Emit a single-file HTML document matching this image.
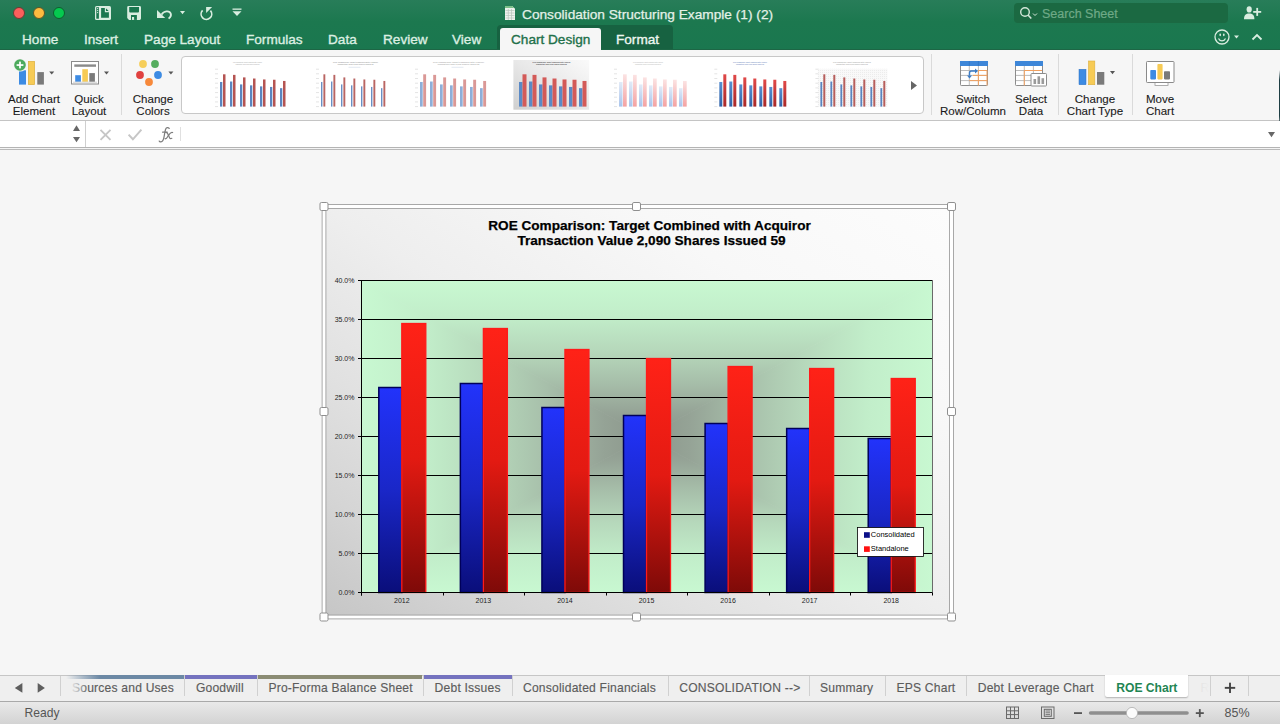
<!DOCTYPE html><html><head><meta charset="utf-8"><style>
*{margin:0;padding:0;box-sizing:border-box}
html,body{width:1280px;height:724px;overflow:hidden;background:#f6f6f6;font-family:"Liberation Sans",sans-serif}
.a{position:absolute}
.t{position:absolute;white-space:nowrap}
</style></head><body>

<div class="a" style="left:0;top:0;width:1280px;height:50px;background:linear-gradient(#287d59 0,#1c784f 22px,#1a774f 100%)"></div><div class="a" style="left:0;top:49px;width:1280px;height:1px;background:#1d6645"></div>
<div class="a" style="left:12.5px;top:6.7px;width:12.6px;height:12.6px;border-radius:50%;background:#fb5f5c;border:1px solid #6b3a33"></div>
<div class="a" style="left:32.7px;top:6.7px;width:12.6px;height:12.6px;border-radius:50%;background:#fdbb40;border:1px solid #5e5526"></div>
<div class="a" style="left:52.5px;top:6.7px;width:12.6px;height:12.6px;border-radius:50%;background:#05c94f;border:1px solid #0d5e2e"></div>
<svg class="a" style="left:0;top:0" width="260" height="28" viewBox="0 0 260 28">
<rect x="95" y="6" width="16" height="14" rx="1.6" fill="#d9ede0"/>
<rect x="96.3" y="7.2" width="2.6" height="11.5" fill="#1a774f"/>
<circle cx="97.6" cy="8.6" r="0.65" fill="#d9ede0"/><circle cx="97.6" cy="10.6" r="0.65" fill="#d9ede0"/><circle cx="97.6" cy="12.6" r="0.65" fill="#d9ede0"/>
<path d="M101.1 8.1H105.3L108.9 11.7V17.8H101.1Z" fill="#1a774f"/>
<path d="M105.4 8.1V11.6H108.9" fill="none" stroke="#d9ede0" stroke-width="1.1"/>
<path d="M106.1 8.4L108.6 10.9H106.1Z" fill="#1a774f"/>
<path d="M128.5 6H139.6A1.4 1.4 0 0 1 141 7.4V18.5A1.4 1.4 0 0 1 139.6 19.9H129L127.2 18.1V7.3A1.3 1.3 0 0 1 128.5 6Z" fill="#d9ede0"/>
<path d="M129.2 7.1H139V11.5A1 1 0 0 1 138 12.5H130.2A1 1 0 0 1 129.2 11.5Z" fill="#1a774f"/>
<rect x="131" y="15" width="5.9" height="4.9" fill="#1a774f"/>
<rect x="132" y="17" width="2.1" height="2.9" fill="#d9ede0"/>
<path d="M161.6 14.6C163.5 10.8 169.6 10 170.8 13.8C171.4 15.6 170.5 17.2 168.6 18.6" fill="none" stroke="#d9ede0" stroke-width="1.8"/>
<path d="M157 10V18.1H165.2Z" fill="#d9ede0"/>
<path d="M180 11h5l-2.5 3.2z" fill="#d9ede0"/>
<path d="M202.6 10.4A5.3 5.3 0 1 0 210.4 10.6" fill="none" stroke="#d9ede0" stroke-width="1.7"/>
<path d="M206.1 7.1H212.1L206.1 13.1Z" fill="#d9ede0"/>
<rect x="232.5" y="8.5" width="9" height="1.3" fill="#d9ede0"/>
<path d="M232.5 11.3h9l-4.5 4.8z" fill="#d9ede0"/>
</svg>
<svg class="a" style="left:504px;top:5px" width="12" height="16" viewBox="0 0 12 16"><path d="M1 1h7.2l2.8 2.8v11.2h-10z" fill="#eef3ee"/><path d="M1 1h7.2l2 2h-9.2z" fill="#7dc08a"/><g stroke="#b8c4bb" stroke-width="0.7"><line x1="1.5" y1="5.5" x2="10.5" y2="5.5"/><line x1="1.5" y1="8" x2="10.5" y2="8"/><line x1="1.5" y1="10.5" x2="10.5" y2="10.5"/><line x1="1.5" y1="13" x2="10.5" y2="13"/><line x1="4.3" y1="4" x2="4.3" y2="15"/><line x1="7.5" y1="4" x2="7.5" y2="15"/></g></svg>
<div class="t" style="left:522px;top:6.6px;font-size:13.7px;color:#e4f1e8;line-height:16px;-webkit-text-stroke:0.25px #e4f1e8">Consolidation Structuring Example (1) (2)</div>
<div class="a" style="left:1014px;top:3px;width:214px;height:20px;border-radius:4px;background:#1b6942"></div>
<svg class="a" style="left:1016px;top:4px" width="24" height="18" viewBox="0 0 24 18"><circle cx="9" cy="8" r="4.3" fill="none" stroke="#d2e6d8" stroke-width="1.4"/><line x1="12" y1="11" x2="15.3" y2="14.5" stroke="#d2e6d8" stroke-width="1.6"/><path d="M17 9.5l2 2l2-2" fill="none" stroke="#d2e6d8" stroke-width="1"/></svg>
<div class="t" style="left:1042px;top:6px;font-size:12.5px;color:#6fa987;line-height:16px;-webkit-text-stroke:0.2px #6fa987">Search Sheet</div>
<svg class="a" style="left:1240px;top:0px" width="30" height="24" viewBox="1240 0 30 24"><ellipse cx="1249.2" cy="9.4" rx="2.6" ry="3.1" fill="#d9ede0"/><path d="M1244 19.2C1244 14.8 1246 13.4 1249.2 13.4S1254.4 14.8 1254.4 19.2Z" fill="#d9ede0"/><rect x="1253.2" y="11" width="8" height="1.8" fill="#d9ede0"/><rect x="1256.3" y="7.9" width="1.8" height="8" fill="#d9ede0"/></svg>
<div class="t" style="left:22px;top:31.6px;font-size:13.6px;color:#dcefe2;line-height:16px;-webkit-text-stroke:0.35px #dcefe2">Home</div>
<div class="t" style="left:84px;top:31.6px;font-size:13.6px;color:#dcefe2;line-height:16px;-webkit-text-stroke:0.35px #dcefe2">Insert</div>
<div class="t" style="left:144px;top:31.6px;font-size:13.6px;color:#dcefe2;line-height:16px;-webkit-text-stroke:0.35px #dcefe2">Page Layout</div>
<div class="t" style="left:246px;top:31.6px;font-size:13.6px;color:#dcefe2;line-height:16px;-webkit-text-stroke:0.35px #dcefe2">Formulas</div>
<div class="t" style="left:328px;top:31.6px;font-size:13.6px;color:#dcefe2;line-height:16px;-webkit-text-stroke:0.35px #dcefe2">Data</div>
<div class="t" style="left:383px;top:31.6px;font-size:13.6px;color:#dcefe2;line-height:16px;-webkit-text-stroke:0.35px #dcefe2">Review</div>
<div class="t" style="left:452px;top:31.6px;font-size:13.6px;color:#dcefe2;line-height:16px;-webkit-text-stroke:0.35px #dcefe2">View</div>
<div class="a" style="left:497px;top:25px;width:176px;height:24px;background:#176241;border-radius:4px 4px 0 0"></div>
<div class="a" style="left:500px;top:28px;width:101px;height:22px;background:#f6f6f6;border-radius:3px 3px 0 0"></div>
<div class="t" style="left:511px;top:31.6px;font-size:13.6px;color:#22704a;line-height:16px;-webkit-text-stroke:0.35px #22704a">Chart Design</div>
<div class="t" style="left:616px;top:31.6px;font-size:13.6px;color:#eef7f1;line-height:16px;-webkit-text-stroke:0.35px #eef7f1">Format</div>
<svg class="a" style="left:1210px;top:27px" width="60" height="20" viewBox="0 0 60 20"><circle cx="12" cy="10" r="7" fill="none" stroke="#d9ede0" stroke-width="1.3"/><ellipse cx="10.2" cy="7.8" rx="0.85" ry="1.35" fill="#d9ede0"/><ellipse cx="13.8" cy="7.8" rx="0.85" ry="1.35" fill="#d9ede0"/><path d="M8.5 11.5a3.8 3.8 0 0 0 7 0" fill="none" stroke="#d9ede0" stroke-width="1.2"/><path d="M24 8.5h5l-2.5 3z" fill="#d9ede0"/><path d="M42.5 12.5l4.5-4.5l4.5 4.5" fill="none" stroke="#d9ede0" stroke-width="1.8"/></svg>
<div class="a" style="left:0;top:50px;width:1280px;height:71px;background:#f6f6f6;border-bottom:1px solid #c4c4c4"></div>
<svg class="a" style="left:0;top:50px" width="1280" height="70" viewBox="0 50 1280 70">
<!-- Add chart element -->
<rect x="19" y="70.3" width="7" height="14.3" fill="#3d8be3"/>
<rect x="28.4" y="61.4" width="6.2" height="23.2" fill="#f7cb55" stroke="#dcae3b" stroke-width="0.7"/>
<rect x="37.3" y="72.1" width="6.6" height="12.5" fill="#7a7a7a"/>
<circle cx="20" cy="65" r="6.6" fill="#f4f4f4"/>
<circle cx="20" cy="65" r="5.8" fill="#4caa5c"/>
<rect x="16.6" y="64.2" width="6.8" height="1.7" fill="#fff"/><rect x="19.15" y="61.6" width="1.7" height="6.8" fill="#fff"/>
<path d="M49.2 71.4h5l-2.5 3.2z" fill="#555"/>
<!-- quick layout -->
<rect x="71.5" y="61.5" width="27" height="22.5" fill="#fff" stroke="#8a8a8a" stroke-width="1"/>
<rect x="74.3" y="64.4" width="21.7" height="2.4" fill="#8a8a8a"/>
<rect x="75.2" y="75.2" width="5.7" height="6.6" fill="#3d8be3"/>
<rect x="82.3" y="69.2" width="5.6" height="12.6" fill="#f7cb55"/>
<rect x="89.3" y="73.1" width="5.6" height="8.7" fill="#7a7a7a"/>
<line x1="73" y1="82.2" x2="97" y2="82.2" stroke="#c8c8c8" stroke-width="0.8"/>
<path d="M104 71.4h5l-2.5 3.2z" fill="#555"/>
<line x1="121.5" y1="54" x2="121.5" y2="115" stroke="#dadada" stroke-width="1"/>
<!-- change colors -->
<circle cx="143" cy="64" r="3.9" fill="#f6ce5a"/>
<circle cx="155" cy="64" r="3.9" fill="#55ad5f"/>
<circle cx="140" cy="75" r="3.9" fill="#e0413f"/>
<circle cx="158" cy="75" r="3.9" fill="#3d8be3"/>
<circle cx="149" cy="82" r="3.9" fill="#f7893a"/>
<path d="M168.4 71.4h5l-2.5 3.2z" fill="#555"/>
<line x1="931.5" y1="54" x2="931.5" y2="115" stroke="#dadada" stroke-width="1"/>
<line x1="1058.5" y1="54" x2="1058.5" y2="115" stroke="#dadada" stroke-width="1"/>
<line x1="1132.5" y1="54" x2="1132.5" y2="115" stroke="#dadada" stroke-width="1"/>
<!-- switch row/column -->
<rect x="960.5" y="61.5" width="27" height="24" fill="#fff" stroke="#8c8c8c" stroke-width="1" rx="0.8"/>
<rect x="960" y="61" width="28" height="5" fill="#3d86d8"/>
<g stroke="#a9a9a9" stroke-width="0.8">
<line x1="969.3" y1="66" x2="969.3" y2="85.5"/><line x1="978.4" y1="66" x2="978.4" y2="85.5"/>
<line x1="961" y1="70.5" x2="987" y2="70.5"/><line x1="961" y1="75.4" x2="987" y2="75.4"/><line x1="961" y1="80.6" x2="987" y2="80.6"/>
</g>
<line x1="969.3" y1="61" x2="969.3" y2="66" stroke="#2a6fbf" stroke-width="0.6"/><line x1="978.4" y1="61" x2="978.4" y2="66" stroke="#2a6fbf" stroke-width="0.6"/>
<g stroke="#f0a060" stroke-width="1">
<line x1="978.4" y1="70.5" x2="978.4" y2="85.5"/><line x1="978.4" y1="70.5" x2="987" y2="70.5"/><line x1="973" y1="75.4" x2="987" y2="75.4"/><line x1="969.3" y1="80.6" x2="987" y2="80.6"/><line x1="987" y1="70.5" x2="987" y2="85.5"/>
</g>
<path d="M969.5 75.5v-2.5a2 2 0 0 1 2-2h4" fill="none" stroke="#3b7cc7" stroke-width="1.4"/>
<path d="M975 68.5l3 2.5l-3 2.5z" fill="#3b7cc7"/>
<path d="M967 75.5h5l-2.5 3z" fill="#3b7cc7"/>
<!-- select data -->
<rect x="1015.5" y="61.5" width="27" height="24" fill="#fff" stroke="#8c8c8c" stroke-width="1" rx="0.8"/>
<rect x="1015" y="61" width="28" height="5" fill="#3d86d8"/>
<g stroke="#a9a9a9" stroke-width="0.8">
<line x1="1024.3" y1="66" x2="1024.3" y2="85.5"/><line x1="1033.4" y1="66" x2="1033.4" y2="85.5"/>
<line x1="1016" y1="70.5" x2="1042" y2="70.5"/><line x1="1016" y1="75.4" x2="1042" y2="75.4"/><line x1="1016" y1="80.6" x2="1042" y2="80.6"/>
</g>
<g stroke="#f0a060" stroke-width="1">
<line x1="1024.3" y1="70.5" x2="1042" y2="70.5"/><line x1="1024.3" y1="70.5" x2="1024.3" y2="85.5"/>
</g>
<rect x="1031" y="73.5" width="15.5" height="12.5" fill="#fff" stroke="#8c8c8c" stroke-width="1" rx="0.8"/>
<rect x="1033.5" y="79" width="2.6" height="5" fill="#9a9a9a"/><rect x="1037.5" y="76.3" width="2.6" height="7.7" fill="#9a9a9a"/><rect x="1041.5" y="78.2" width="2.6" height="5.8" fill="#9a9a9a"/>
<!-- change chart type -->
<rect x="1079" y="69.3" width="7" height="15.4" fill="#3d8be3" stroke="#2d6fc0" stroke-width="0.5"/>
<rect x="1088.5" y="61" width="6.3" height="23.7" fill="#f7cb55" stroke="#dcae3b" stroke-width="0.6"/>
<rect x="1097" y="72" width="7.3" height="12.7" fill="#7a7a7a"/>
<path d="M1110 71h5l-2.5 3.2z" fill="#555"/>
<!-- move chart -->
<rect x="1155" y="82" width="13" height="3.5" fill="#fff" stroke="#9a9a9a" stroke-width="0.8"/>
<rect x="1146.5" y="61.5" width="27.5" height="21" fill="#fff" stroke="#8a8a8a" stroke-width="1" rx="0.8"/>
<rect x="1150.3" y="70" width="5.7" height="9.4" fill="#3d8be3" rx="0.8"/>
<rect x="1157.4" y="64" width="5.2" height="15.4" fill="#f7cb55" rx="0.8"/>
<rect x="1164" y="71.3" width="6" height="8.1" fill="#7a7a7a" rx="0.8"/>
</svg>
<div class="a" style="left:181px;top:56px;width:743px;height:58px;background:#fff;border:1px solid #c8c8c8;border-radius:4px"></div>
<svg class="a" style="left:905px;top:78px" width="14" height="14" viewBox="0 0 14 14"><path d="M6 3l6 4.5l-6 4.5z" fill="#666"/></svg>

<div class="a" style="left:1279px;top:70px;width:1px;height:56px;background:linear-gradient(rgba(30,62,68,0),#1e3e44 10px,#1e3e44 46px,rgba(30,62,68,0.3))"></div>

<div class="t" style="left:-16px;width:100px;text-align:center;top:93px;font-size:11.55px;color:#1a1a1a;line-height:13px;-webkit-text-stroke:0.1px #1a1a1a">Add Chart</div>
<div class="t" style="left:-16px;width:100px;text-align:center;top:105px;font-size:11.55px;color:#1a1a1a;line-height:13px;-webkit-text-stroke:0.1px #1a1a1a">Element</div>
<div class="t" style="left:39px;width:100px;text-align:center;top:93px;font-size:11.55px;color:#1a1a1a;line-height:13px;-webkit-text-stroke:0.1px #1a1a1a">Quick</div>
<div class="t" style="left:39px;width:100px;text-align:center;top:105px;font-size:11.55px;color:#1a1a1a;line-height:13px;-webkit-text-stroke:0.1px #1a1a1a">Layout</div>
<div class="t" style="left:103px;width:100px;text-align:center;top:93px;font-size:11.55px;color:#1a1a1a;line-height:13px;-webkit-text-stroke:0.1px #1a1a1a">Change</div>
<div class="t" style="left:103px;width:100px;text-align:center;top:105px;font-size:11.55px;color:#1a1a1a;line-height:13px;-webkit-text-stroke:0.1px #1a1a1a">Colors</div>
<div class="t" style="left:923px;width:100px;text-align:center;top:93px;font-size:11.55px;color:#1a1a1a;line-height:13px;-webkit-text-stroke:0.1px #1a1a1a">Switch</div>
<div class="t" style="left:923px;width:100px;text-align:center;top:105px;font-size:11.55px;color:#1a1a1a;line-height:13px;-webkit-text-stroke:0.1px #1a1a1a">Row/Column</div>
<div class="t" style="left:981px;width:100px;text-align:center;top:93px;font-size:11.55px;color:#1a1a1a;line-height:13px;-webkit-text-stroke:0.1px #1a1a1a">Select</div>
<div class="t" style="left:981px;width:100px;text-align:center;top:105px;font-size:11.55px;color:#1a1a1a;line-height:13px;-webkit-text-stroke:0.1px #1a1a1a">Data</div>
<div class="t" style="left:1045px;width:100px;text-align:center;top:93px;font-size:11.55px;color:#1a1a1a;line-height:13px;-webkit-text-stroke:0.1px #1a1a1a">Change</div>
<div class="t" style="left:1045px;width:100px;text-align:center;top:105px;font-size:11.55px;color:#1a1a1a;line-height:13px;-webkit-text-stroke:0.1px #1a1a1a">Chart Type</div>
<div class="t" style="left:1110px;width:100px;text-align:center;top:93px;font-size:11.55px;color:#1a1a1a;line-height:13px;-webkit-text-stroke:0.1px #1a1a1a">Move</div>
<div class="t" style="left:1110px;width:100px;text-align:center;top:105px;font-size:11.55px;color:#1a1a1a;line-height:13px;-webkit-text-stroke:0.1px #1a1a1a">Chart</div>
<div class="a" style="left:0;top:121px;width:1280px;height:26px;background:#fff"></div>
<div class="a" style="left:0;top:147px;width:1280px;height:1px;background:#b4b4b4"></div>
<div class="a" style="left:0;top:148px;width:1280px;height:1px;background:#f4f4f4"></div>
<div class="a" style="left:0;top:149px;width:1280px;height:1px;background:#b9b9b9"></div>
<div class="a" style="left:85px;top:121px;width:1px;height:26px;background:#cfcfcf"></div>
<svg class="a" style="left:0;top:121px" width="1280" height="26" viewBox="0 121 1280 26">
<path d="M73 131h7l-3.5-5.8z" fill="#676767"/>
<path d="M73 137h7l-3.5 5.3z" fill="#676767"/>
<path d="M100.5 129.8l10 10M110.5 129.8l-10 10" stroke="#c6c6c6" stroke-width="1.9" fill="none"/>
<path d="M128.6 134.6l4.3 4.7l8.5-9.6" stroke="#c6c6c6" stroke-width="2" fill="none"/>
<line x1="180.5" y1="127" x2="180.5" y2="141" stroke="#e0e0e0" stroke-width="1"/>
<path d="M1268 132h7l-3.5 5.3z" fill="#676767"/>
</svg>
<svg class="a" style="left:150px;top:121px" width="30" height="26" viewBox="150 121 30 26"><g fill="none" stroke="#7d7d7d" stroke-width="1.25" stroke-linecap="round">
<path d="M169.2 128.4C168.2 127.2 166.4 127.3 165.6 129.2C165 130.8 164.6 133.6 164.1 136.6C163.6 139.6 162.9 141.6 160.9 141.9C160 142 159.4 141.6 159.2 141.1"/>
<path d="M162.6 132.2H167.2"/>
<path d="M165.8 132.3C167.2 132 167.8 133.2 168.5 135.2C169.3 137.6 169.8 139.3 171.8 138.3"/>
<path d="M172.6 132.5C171.2 131.8 169.8 133.2 168.3 135.6C167.2 137.4 166.5 139.2 165.1 138.7"/>
</g></svg>

<svg class="a" style="left:300px;top:190px" width="680" height="450" viewBox="300 190 680 450">
<defs>
<linearGradient id="cabg" x1="1" y1="0" x2="0" y2="1"><stop offset="0" stop-color="#fcfcfc"/><stop offset="0.25" stop-color="#f8f8f8"/><stop offset="0.5" stop-color="#eeeeee"/><stop offset="0.7" stop-color="#e1e1e1"/><stop offset="0.85" stop-color="#d5d5d5"/><stop offset="1" stop-color="#c6c6c6"/></linearGradient>
<linearGradient id="pt" gradientUnits="userSpaceOnUse" x1="646.5" y1="436.5" x2="646.5" y2="280.5"><stop offset="0" stop-color="#8b968b"/><stop offset="0.15" stop-color="#95a396"/><stop offset="0.35" stop-color="#a7bfaa"/><stop offset="0.55" stop-color="#b6d8bb"/><stop offset="0.78" stop-color="#c2eeca"/><stop offset="1" stop-color="#c8f8d1"/></linearGradient>
<linearGradient id="pb" gradientUnits="userSpaceOnUse" x1="646.5" y1="436.5" x2="646.5" y2="592.5"><stop offset="0" stop-color="#8b968b"/><stop offset="0.15" stop-color="#95a396"/><stop offset="0.35" stop-color="#a7bfaa"/><stop offset="0.55" stop-color="#b6d8bb"/><stop offset="0.78" stop-color="#c2eeca"/><stop offset="1" stop-color="#c8f8d1"/></linearGradient>
<linearGradient id="pl" gradientUnits="userSpaceOnUse" x1="646.5" y1="436.5" x2="361" y2="436.5"><stop offset="0" stop-color="#8b968b"/><stop offset="0.15" stop-color="#95a396"/><stop offset="0.35" stop-color="#a7bfaa"/><stop offset="0.55" stop-color="#b6d8bb"/><stop offset="0.78" stop-color="#c2eeca"/><stop offset="1" stop-color="#c8f8d1"/></linearGradient>
<linearGradient id="pr" gradientUnits="userSpaceOnUse" x1="646.5" y1="436.5" x2="932" y2="436.5"><stop offset="0" stop-color="#8b968b"/><stop offset="0.15" stop-color="#95a396"/><stop offset="0.35" stop-color="#a7bfaa"/><stop offset="0.55" stop-color="#b6d8bb"/><stop offset="0.78" stop-color="#c2eeca"/><stop offset="1" stop-color="#c8f8d1"/></linearGradient>
<linearGradient id="gb" x1="0" y1="0" x2="0" y2="1"><stop offset="0" stop-color="#2233fb"/><stop offset="0.5" stop-color="#1a27c8"/><stop offset="1" stop-color="#0a0e7a"/></linearGradient>
<linearGradient id="gr" x1="0" y1="0" x2="0" y2="1"><stop offset="0" stop-color="#ff2217"/><stop offset="0.5" stop-color="#e31a12"/><stop offset="1" stop-color="#7e0a08"/></linearGradient>
</defs>
<rect x="326" y="208.5" width="624" height="407" fill="url(#cabg)"/>
<polygon points="361,280.5 932,280.5 646.5,436.5" fill="url(#pt)" stroke="url(#pt)" stroke-width="0.8"/>
<polygon points="361,592.5 932,592.5 646.5,436.5" fill="url(#pb)" stroke="url(#pb)" stroke-width="0.8"/>
<polygon points="361,280.5 361,592.5 646.5,436.5" fill="url(#pl)" stroke="url(#pl)" stroke-width="0.8"/>
<polygon points="932,280.5 932,592.5 646.5,436.5" fill="url(#pr)" stroke="url(#pr)" stroke-width="0.8"/>
<rect x="361.5" y="280.5" width="571" height="312.0" fill="none" stroke="#6a6a6a" stroke-width="1"/>
<line x1="358" y1="280.50" x2="932" y2="280.50" stroke="#000" stroke-width="1"/>
<line x1="358" y1="319.50" x2="932" y2="319.50" stroke="#000" stroke-width="1"/>
<line x1="358" y1="358.50" x2="932" y2="358.50" stroke="#000" stroke-width="1"/>
<line x1="358" y1="397.50" x2="932" y2="397.50" stroke="#000" stroke-width="1"/>
<line x1="358" y1="436.50" x2="932" y2="436.50" stroke="#000" stroke-width="1"/>
<line x1="358" y1="475.50" x2="932" y2="475.50" stroke="#000" stroke-width="1"/>
<line x1="358" y1="514.50" x2="932" y2="514.50" stroke="#000" stroke-width="1"/>
<line x1="358" y1="553.50" x2="932" y2="553.50" stroke="#000" stroke-width="1"/>
<line x1="358" y1="592.50" x2="932" y2="592.50" stroke="#000" stroke-width="1"/>
<rect x="378.80" y="387.5" width="23" height="205.00" fill="url(#gb)" stroke="#00005a" stroke-width="1.5"/>
<rect x="401.80" y="323.5" width="24" height="269.00" fill="url(#gr)" stroke="#ff1a1a" stroke-width="1.3"/>
<rect x="460.37" y="383.5" width="23" height="209.00" fill="url(#gb)" stroke="#00005a" stroke-width="1.5"/>
<rect x="483.37" y="328.5" width="24" height="264.00" fill="url(#gr)" stroke="#ff1a1a" stroke-width="1.3"/>
<rect x="541.94" y="407.5" width="23" height="185.00" fill="url(#gb)" stroke="#00005a" stroke-width="1.5"/>
<rect x="564.94" y="349.5" width="24" height="243.00" fill="url(#gr)" stroke="#ff1a1a" stroke-width="1.3"/>
<rect x="623.51" y="415.5" width="23" height="177.00" fill="url(#gb)" stroke="#00005a" stroke-width="1.5"/>
<rect x="646.51" y="358.5" width="24" height="234.00" fill="url(#gr)" stroke="#ff1a1a" stroke-width="1.3"/>
<rect x="705.09" y="423.5" width="23" height="169.00" fill="url(#gb)" stroke="#00005a" stroke-width="1.5"/>
<rect x="728.09" y="366.5" width="24" height="226.00" fill="url(#gr)" stroke="#ff1a1a" stroke-width="1.3"/>
<rect x="786.66" y="428.5" width="23" height="164.00" fill="url(#gb)" stroke="#00005a" stroke-width="1.5"/>
<rect x="809.66" y="368.5" width="24" height="224.00" fill="url(#gr)" stroke="#ff1a1a" stroke-width="1.3"/>
<rect x="868.23" y="438.5" width="23" height="154.00" fill="url(#gb)" stroke="#00005a" stroke-width="1.5"/>
<rect x="891.23" y="378.5" width="24" height="214.00" fill="url(#gr)" stroke="#ff1a1a" stroke-width="1.3"/>
<line x1="361.5" y1="280.0" x2="361.5" y2="595.5" stroke="#000" stroke-width="1"/>
<line x1="361" y1="592.5" x2="932" y2="592.5" stroke="#000" stroke-width="1.2"/>
<line x1="361.50" y1="592.5" x2="361.50" y2="595.5" stroke="#000" stroke-width="1"/>
<line x1="443.50" y1="592.5" x2="443.50" y2="595.5" stroke="#000" stroke-width="1"/>
<line x1="524.50" y1="592.5" x2="524.50" y2="595.5" stroke="#000" stroke-width="1"/>
<line x1="606.50" y1="592.5" x2="606.50" y2="595.5" stroke="#000" stroke-width="1"/>
<line x1="687.50" y1="592.5" x2="687.50" y2="595.5" stroke="#000" stroke-width="1"/>
<line x1="769.50" y1="592.5" x2="769.50" y2="595.5" stroke="#000" stroke-width="1"/>
<line x1="850.50" y1="592.5" x2="850.50" y2="595.5" stroke="#000" stroke-width="1"/>
<line x1="932.50" y1="592.5" x2="932.50" y2="595.5" stroke="#000" stroke-width="1"/>
<g font-family="Liberation Sans, sans-serif" font-size="7px" fill="#1e1e1e">
<text x="354.5" y="283.00" text-anchor="end">40.0%</text>
<text x="354.5" y="322.00" text-anchor="end">35.0%</text>
<text x="354.5" y="361.00" text-anchor="end">30.0%</text>
<text x="354.5" y="400.00" text-anchor="end">25.0%</text>
<text x="354.5" y="439.00" text-anchor="end">20.0%</text>
<text x="354.5" y="478.00" text-anchor="end">15.0%</text>
<text x="354.5" y="517.00" text-anchor="end">10.0%</text>
<text x="354.5" y="556.00" text-anchor="end">5.0%</text>
<text x="354.5" y="595.00" text-anchor="end">0.0%</text>
<text x="401.79" y="603" text-anchor="middle">2012</text>
<text x="483.36" y="603" text-anchor="middle">2013</text>
<text x="564.93" y="603" text-anchor="middle">2014</text>
<text x="646.50" y="603" text-anchor="middle">2015</text>
<text x="728.07" y="603" text-anchor="middle">2016</text>
<text x="809.64" y="603" text-anchor="middle">2017</text>
<text x="891.21" y="603" text-anchor="middle">2018</text>
</g>
<g font-family="Liberation Sans, sans-serif" font-size="13.6px" font-weight="bold" fill="#000" stroke="#000" stroke-width="0.25" text-anchor="middle">
<text x="649.5" y="229.9">ROE Comparison: Target Combined with Acquiror</text>
<text x="651.5" y="244.8">Transaction Value 2,090 Shares Issued 59</text>
</g>
<rect x="857.5" y="527.5" width="66" height="29" fill="#fff" stroke="#000" stroke-width="0.8"/>
<rect x="864" y="532.2" width="5.8" height="5.6" fill="#0a0f88"/>
<rect x="864" y="546.3" width="5.8" height="5.6" fill="#ff1010"/>
<g font-family="Liberation Sans, sans-serif" font-size="7.5px" fill="#000">
<text x="870.8" y="537.3">Consolidated</text>
<text x="870.8" y="551.3">Standalone</text>
</g>
<rect x="324" y="206.5" width="627.5" height="410.5" fill="none" stroke="#959595" stroke-width="4.6"/>
<rect x="324" y="206.5" width="627.5" height="410.5" fill="none" stroke="#ffffff" stroke-width="3"/>
<rect x="320" y="202.5" width="8" height="8" rx="1.4" fill="#fff" stroke="#8f8f8f" stroke-width="1"/>
<rect x="632.5" y="202.5" width="8" height="8" rx="1.4" fill="#fff" stroke="#8f8f8f" stroke-width="1"/>
<rect x="947.5" y="202.5" width="8" height="8" rx="1.4" fill="#fff" stroke="#8f8f8f" stroke-width="1"/>
<rect x="320" y="407.5" width="8" height="8" rx="1.4" fill="#fff" stroke="#8f8f8f" stroke-width="1"/>
<rect x="947.5" y="407.5" width="8" height="8" rx="1.4" fill="#fff" stroke="#8f8f8f" stroke-width="1"/>
<rect x="320" y="613" width="8" height="8" rx="1.4" fill="#fff" stroke="#8f8f8f" stroke-width="1"/>
<rect x="632.5" y="613" width="8" height="8" rx="1.4" fill="#fff" stroke="#8f8f8f" stroke-width="1"/>
<rect x="947.5" y="613" width="8" height="8" rx="1.4" fill="#fff" stroke="#8f8f8f" stroke-width="1"/>
</svg>
<div class="a" style="left:0;top:675px;width:1280px;height:26px;background:#efefef;border-top:1px solid #c6c6c6"></div>
<div class="a" style="left:0;top:701px;width:1280px;height:1px;background:#a9a9a9"></div>
<div class="a" style="left:0;top:702px;width:1280px;height:22px;background:linear-gradient(#e9e9e9,#d3d3d3)"></div>
<div class="a" style="left:60.2px;top:676px;width:1px;height:20px;background:#d0d0d0"></div>
<div class="a" style="left:183.9px;top:676px;width:1px;height:20px;background:#d0d0d0"></div>
<div class="a" style="left:257.0px;top:676px;width:1px;height:20px;background:#d0d0d0"></div>
<div class="a" style="left:422.9px;top:676px;width:1px;height:20px;background:#d0d0d0"></div>
<div class="a" style="left:512.0px;top:676px;width:1px;height:20px;background:#d0d0d0"></div>
<div class="a" style="left:667.9px;top:676px;width:1px;height:20px;background:#d0d0d0"></div>
<div class="a" style="left:808.9px;top:676px;width:1px;height:20px;background:#d0d0d0"></div>
<div class="a" style="left:885.1px;top:676px;width:1px;height:20px;background:#d0d0d0"></div>
<div class="a" style="left:965.8px;top:676px;width:1px;height:20px;background:#d0d0d0"></div>
<div class="a" style="left:1210.0px;top:676px;width:1px;height:20px;background:#d0d0d0"></div>
<div class="a" style="left:1248.2px;top:676px;width:1px;height:20px;background:#d0d0d0"></div>
<div class="a" style="left:66px;top:675.3px;width:118px;height:3.6px;background:linear-gradient(90deg,rgba(109,138,166,0) 0,rgba(109,138,166,0.5) 16px,#6c89a5 34px)"></div>
<div class="a" style="left:185px;top:675.3px;width:72px;height:3.6px;background:#7573bf"></div>
<div class="a" style="left:258.4px;top:675.3px;width:164.1px;height:3.6px;background:#8b8c74"></div>
<div class="a" style="left:424px;top:675.3px;width:87.6px;height:3.6px;background:#7573bf"></div>
<div class="a" style="left:1104.5px;top:675px;width:83.5px;height:22px;background:#fff;box-shadow:0 1px 1.5px rgba(0,0,0,0.25);border-radius:0 0 2px 2px"></div>
<div class="t" style="left:72px;top:681px;font-size:12.1px;letter-spacing:0.2px;line-height:14px;color:#5c5c5c;-webkit-text-stroke:0.15px #5c5c5c">Sources and Uses</div>
<div class="t" style="left:195.9px;top:681px;font-size:12.1px;letter-spacing:0.2px;line-height:14px;color:#5c5c5c;-webkit-text-stroke:0.15px #5c5c5c">Goodwill</div>
<div class="t" style="left:268.4px;top:681px;font-size:12.1px;letter-spacing:0.2px;line-height:14px;color:#5c5c5c;-webkit-text-stroke:0.15px #5c5c5c">Pro-Forma Balance Sheet</div>
<div class="t" style="left:434.6px;top:681px;font-size:12.1px;letter-spacing:0.2px;line-height:14px;color:#5c5c5c;-webkit-text-stroke:0.15px #5c5c5c">Debt Issues</div>
<div class="t" style="left:523px;top:681px;font-size:12.1px;letter-spacing:0.2px;line-height:14px;color:#5c5c5c;-webkit-text-stroke:0.15px #5c5c5c">Consolidated Financials</div>
<div class="t" style="left:679.3px;top:681px;font-size:12.1px;letter-spacing:0.2px;line-height:14px;color:#5c5c5c;-webkit-text-stroke:0.15px #5c5c5c">CONSOLIDATION --&gt;</div>
<div class="t" style="left:820px;top:681px;font-size:12.1px;letter-spacing:0.2px;line-height:14px;color:#5c5c5c;-webkit-text-stroke:0.15px #5c5c5c">Summary</div>
<div class="t" style="left:896.5px;top:681px;font-size:12.1px;letter-spacing:0.2px;line-height:14px;color:#5c5c5c;-webkit-text-stroke:0.15px #5c5c5c">EPS Chart</div>
<div class="t" style="left:977.75px;top:681px;font-size:12.1px;letter-spacing:0.2px;line-height:14px;color:#5c5c5c;-webkit-text-stroke:0.15px #5c5c5c">Debt Leverage Chart</div>
<div class="a" style="left:62px;top:679px;width:26px;height:17px;background:linear-gradient(90deg,#efefef 0,rgba(239,239,239,0.8) 50%,rgba(239,239,239,0) 100%)"></div>
<div class="t" style="left:1116.25px;top:681px;font-size:12.1px;line-height:14px;color:#1f8553;font-weight:bold">ROE Chart</div>
<div class="t" style="left:1200.5px;top:681px;font-size:12.2px;line-height:14px;color:#dcdcdc">R</div>
<div class="a" style="left:1199px;top:676px;width:11px;height:20px;background:linear-gradient(90deg,rgba(239,239,239,0.3),#efefef)"></div>
<svg class="a" style="left:0;top:672px" width="1280" height="52" viewBox="0 672 1280 52">
<path d="M22.4 683v9.8l-7.6-4.9z" fill="#5e5e5e"/>
<path d="M37.7 683v9.8l7.2-4.9z" fill="#5e5e5e"/>
<rect x="1224.8" y="686.9" width="10.4" height="1.9" fill="#444"/><rect x="1229.05" y="682.7" width="1.9" height="10.3" fill="#444"/>
<g fill="none" stroke="#6a6a6a" stroke-width="1">
<rect x="1006.5" y="707" width="12" height="11.5"/>
<line x1="1010.5" y1="707" x2="1010.5" y2="718.5"/><line x1="1014.5" y1="707" x2="1014.5" y2="718.5"/>
<line x1="1006.5" y1="710.8" x2="1018.5" y2="710.8"/><line x1="1006.5" y1="714.6" x2="1018.5" y2="714.6"/>
<rect x="1041.5" y="707" width="12.5" height="11.5"/>
<rect x="1044.3" y="709.3" width="7" height="7"/>
</g>
<g stroke="#6a6a6a" stroke-width="0.9"><line x1="1045.5" y1="711" x2="1050" y2="711"/><line x1="1045.5" y1="712.8" x2="1050" y2="712.8"/><line x1="1045.5" y1="714.6" x2="1050" y2="714.6"/></g>
<rect x="1074" y="712.2" width="8" height="1.8" fill="#555"/>
<rect x="1088.8" y="711.2" width="100" height="3.6" rx="1.8" fill="#8f8f8f"/>
<circle cx="1132" cy="713" r="5.6" fill="#fcfcfc" stroke="#b0b0b0" stroke-width="0.8"/>
<rect x="1195.8" y="712.2" width="8" height="1.8" fill="#555"/><rect x="1198.9" y="709.1" width="1.8" height="8" fill="#555"/>
</svg>
<div class="t" style="left:24.6px;top:706px;font-size:12.1px;line-height:14px;color:#555">Ready</div>
<div class="t" style="left:1224.5px;top:706px;font-size:12.5px;line-height:14px;color:#555">85%</div>
<svg class="a" style="left:181px;top:56px" width="743" height="58" viewBox="181 56 743 58">
<defs>
<linearGradient id="t4bg" x1="1" y1="0" x2="0" y2="1"><stop offset="0" stop-color="#fafafa"/><stop offset="0.5" stop-color="#e8e8e8"/><stop offset="1" stop-color="#cfcfcf"/></linearGradient>
<linearGradient id="t5b" x1="0" y1="0" x2="0" y2="1"><stop offset="0" stop-color="#e3ebf7"/><stop offset="1" stop-color="#a9c4ec"/></linearGradient>
<linearGradient id="t5r" x1="0" y1="0" x2="0" y2="1"><stop offset="0" stop-color="#fbe3e3"/><stop offset="1" stop-color="#f4a2a2"/></linearGradient>
<linearGradient id="t6b" x1="0" y1="0" x2="0" y2="1"><stop offset="0" stop-color="#5a8fd0"/><stop offset="1" stop-color="#2f62a8"/></linearGradient>
<linearGradient id="t6r" x1="0" y1="0" x2="0" y2="1"><stop offset="0" stop-color="#e04848"/><stop offset="1" stop-color="#a82828"/></linearGradient>
<pattern id="dots" width="2" height="2" patternUnits="userSpaceOnUse"><rect width="2" height="2" fill="#f9f9f9"/><rect width="1" height="1" fill="#ececec"/></pattern>
</defs>
<rect x="513.4" y="60" width="75.7" height="49.7" fill="url(#t4bg)"/>
<rect x="817.8" y="68.8" width="69.7" height="37.8" fill="url(#dots)"/>
<g fill="#e4e4e4">
<rect x="215.0" y="106.1" width="3" height="1"/>
<rect x="215.0" y="101.4" width="3" height="1"/>
<rect x="215.0" y="96.7" width="3" height="1"/>
<rect x="215.0" y="92.1" width="3" height="1"/>
<rect x="215.0" y="87.4" width="3" height="1"/>
<rect x="215.0" y="82.7" width="3" height="1"/>
<rect x="215.0" y="78.0" width="3" height="1"/>
<rect x="215.0" y="73.3" width="3" height="1"/>
<rect x="215.0" y="68.7" width="3" height="1"/>
</g>
<text x="247.5" y="63.2" font-family="Liberation Sans, sans-serif" font-size="2.3px" font-weight="bold" fill="#b8b8b8" text-anchor="middle" textLength="29" lengthAdjust="spacingAndGlyphs">ROE Comparison: Target Combined with Acquiror</text>
<text x="247.5" y="65.3" font-family="Liberation Sans, sans-serif" font-size="2.3px" font-weight="bold" fill="#b8b8b8" text-anchor="middle" textLength="24" lengthAdjust="spacingAndGlyphs">Transaction Value 2,090 Shares Issued 59</text>
<rect x="220.00" y="81.98" width="2.3" height="24.62" fill="#5b85bf"/>
<rect x="223.00" y="74.31" width="2.5" height="32.29" fill="#b55452"/>
<rect x="230.00" y="81.52" width="2.3" height="25.08" fill="#5b85bf"/>
<rect x="233.00" y="74.87" width="2.5" height="31.73" fill="#b55452"/>
<rect x="240.00" y="84.42" width="2.3" height="22.18" fill="#5b85bf"/>
<rect x="243.00" y="77.40" width="2.5" height="29.20" fill="#b55452"/>
<rect x="250.00" y="85.35" width="2.3" height="21.25" fill="#5b85bf"/>
<rect x="253.00" y="78.52" width="2.5" height="28.08" fill="#b55452"/>
<rect x="260.00" y="86.38" width="2.3" height="20.22" fill="#5b85bf"/>
<rect x="263.00" y="79.46" width="2.5" height="27.14" fill="#b55452"/>
<rect x="270.00" y="86.94" width="2.3" height="19.66" fill="#5b85bf"/>
<rect x="273.00" y="79.74" width="2.5" height="26.86" fill="#b55452"/>
<rect x="280.00" y="88.16" width="2.3" height="18.44" fill="#5b85bf"/>
<rect x="283.00" y="80.95" width="2.5" height="25.65" fill="#b55452"/>
<g fill="#e4e4e4">
<rect x="316.0" y="106.1" width="3" height="1"/>
<rect x="316.0" y="101.4" width="3" height="1"/>
<rect x="316.0" y="96.7" width="3" height="1"/>
<rect x="316.0" y="92.1" width="3" height="1"/>
<rect x="316.0" y="87.4" width="3" height="1"/>
<rect x="316.0" y="82.7" width="3" height="1"/>
<rect x="316.0" y="78.0" width="3" height="1"/>
<rect x="316.0" y="73.3" width="3" height="1"/>
<rect x="316.0" y="68.7" width="3" height="1"/>
</g>
<text x="355.5" y="63.2" font-family="Liberation Sans, sans-serif" font-size="2.3px" font-weight="bold" fill="#a8a8a8" text-anchor="middle" textLength="45" lengthAdjust="spacingAndGlyphs">ROE Comparison: Target Combined with Acquiror</text>
<text x="355.5" y="65.3" font-family="Liberation Sans, sans-serif" font-size="2.3px" font-weight="bold" fill="#a8a8a8" text-anchor="middle" textLength="36" lengthAdjust="spacingAndGlyphs">Transaction Value 2,090 Shares Issued 59</text>
<rect x="348.5" y="66.8" width="12" height="0.9" fill="#dfe6ef"/>
<rect x="321.00" y="81.98" width="1.4" height="24.62" fill="#6a8fc4"/>
<rect x="323.40" y="74.31" width="1.9" height="32.29" fill="#b96563"/>
<rect x="331.00" y="81.52" width="1.4" height="25.08" fill="#6a8fc4"/>
<rect x="333.40" y="74.87" width="1.9" height="31.73" fill="#b96563"/>
<rect x="341.00" y="84.42" width="1.4" height="22.18" fill="#6a8fc4"/>
<rect x="343.40" y="77.40" width="1.9" height="29.20" fill="#b96563"/>
<rect x="351.00" y="85.35" width="1.4" height="21.25" fill="#6a8fc4"/>
<rect x="353.40" y="78.52" width="1.9" height="28.08" fill="#b96563"/>
<rect x="361.00" y="86.38" width="1.4" height="20.22" fill="#6a8fc4"/>
<rect x="363.40" y="79.46" width="1.9" height="27.14" fill="#b96563"/>
<rect x="371.00" y="86.94" width="1.4" height="19.66" fill="#6a8fc4"/>
<rect x="373.40" y="79.74" width="1.9" height="26.86" fill="#b96563"/>
<rect x="381.00" y="88.16" width="1.4" height="18.44" fill="#6a8fc4"/>
<rect x="383.40" y="80.95" width="1.9" height="25.65" fill="#b96563"/>
<g fill="#e4e4e4">
<rect x="415.0" y="106.1" width="3" height="1"/>
<rect x="415.0" y="101.4" width="3" height="1"/>
<rect x="415.0" y="96.7" width="3" height="1"/>
<rect x="415.0" y="92.1" width="3" height="1"/>
<rect x="415.0" y="87.4" width="3" height="1"/>
<rect x="415.0" y="82.7" width="3" height="1"/>
<rect x="415.0" y="78.0" width="3" height="1"/>
<rect x="415.0" y="73.3" width="3" height="1"/>
<rect x="415.0" y="68.7" width="3" height="1"/>
</g>
<text x="458.5" y="63.2" font-family="Liberation Sans, sans-serif" font-size="2.3px" font-weight="bold" fill="#b4b4b4" text-anchor="middle" textLength="51" lengthAdjust="spacingAndGlyphs">ROE Comparison: Target Combined with Acquiror</text>
<text x="458.5" y="65.3" font-family="Liberation Sans, sans-serif" font-size="2.3px" font-weight="bold" fill="#b4b4b4" text-anchor="middle" textLength="42" lengthAdjust="spacingAndGlyphs">Transaction Value 2,090 Shares Issued 59</text>
<rect x="451.5" y="66.8" width="12" height="0.9" fill="#dfe6ef"/>
<rect x="420.00" y="81.98" width="2.7" height="24.62" fill="#8eaed8"/>
<rect x="423.20" y="74.31" width="2.9" height="32.29" fill="#da9896"/>
<rect x="430.00" y="81.52" width="2.7" height="25.08" fill="#8eaed8"/>
<rect x="433.20" y="74.87" width="2.9" height="31.73" fill="#da9896"/>
<rect x="440.00" y="84.42" width="2.7" height="22.18" fill="#8eaed8"/>
<rect x="443.20" y="77.40" width="2.9" height="29.20" fill="#da9896"/>
<rect x="450.00" y="85.35" width="2.7" height="21.25" fill="#8eaed8"/>
<rect x="453.20" y="78.52" width="2.9" height="28.08" fill="#da9896"/>
<rect x="460.00" y="86.38" width="2.7" height="20.22" fill="#8eaed8"/>
<rect x="463.20" y="79.46" width="2.9" height="27.14" fill="#da9896"/>
<rect x="470.00" y="86.94" width="2.7" height="19.66" fill="#8eaed8"/>
<rect x="473.20" y="79.74" width="2.9" height="26.86" fill="#da9896"/>
<rect x="480.00" y="88.16" width="2.7" height="18.44" fill="#8eaed8"/>
<rect x="483.20" y="80.95" width="2.9" height="25.65" fill="#da9896"/>
<text x="551.5" y="63.2" font-family="Liberation Sans, sans-serif" font-size="2.3px" font-weight="bold" fill="#4a4a4a" text-anchor="middle" textLength="38" lengthAdjust="spacingAndGlyphs">ROE Comparison: Target Combined with Acquiror</text>
<text x="551.5" y="65.3" font-family="Liberation Sans, sans-serif" font-size="2.3px" font-weight="bold" fill="#4a4a4a" text-anchor="middle" textLength="31" lengthAdjust="spacingAndGlyphs">Transaction Value 2,090 Shares Issued 59</text>
<rect x="519.00" y="81.98" width="3.5" height="24.62" fill="#5b8ac6"/>
<rect x="522.50" y="74.31" width="4.0" height="32.29" fill="#d35a58"/>
<rect x="529.00" y="81.52" width="3.5" height="25.08" fill="#5b8ac6"/>
<rect x="532.50" y="74.87" width="4.0" height="31.73" fill="#d35a58"/>
<rect x="539.00" y="84.42" width="3.5" height="22.18" fill="#5b8ac6"/>
<rect x="542.50" y="77.40" width="4.0" height="29.20" fill="#d35a58"/>
<rect x="549.00" y="85.35" width="3.5" height="21.25" fill="#5b8ac6"/>
<rect x="552.50" y="78.52" width="4.0" height="28.08" fill="#d35a58"/>
<rect x="559.00" y="86.38" width="3.5" height="20.22" fill="#5b8ac6"/>
<rect x="562.50" y="79.46" width="4.0" height="27.14" fill="#d35a58"/>
<rect x="569.00" y="86.94" width="3.5" height="19.66" fill="#5b8ac6"/>
<rect x="572.50" y="79.74" width="4.0" height="26.86" fill="#d35a58"/>
<rect x="579.00" y="88.16" width="3.5" height="18.44" fill="#5b8ac6"/>
<rect x="582.50" y="80.95" width="4.0" height="25.65" fill="#d35a58"/>
<g fill="#e4e4e4">
<rect x="614.0" y="106.1" width="3" height="1"/>
<rect x="614.0" y="101.4" width="3" height="1"/>
<rect x="614.0" y="96.7" width="3" height="1"/>
<rect x="614.0" y="92.1" width="3" height="1"/>
<rect x="614.0" y="87.4" width="3" height="1"/>
<rect x="614.0" y="82.7" width="3" height="1"/>
<rect x="614.0" y="78.0" width="3" height="1"/>
<rect x="614.0" y="73.3" width="3" height="1"/>
<rect x="614.0" y="68.7" width="3" height="1"/>
</g>
<text x="648.0" y="63.2" font-family="Liberation Sans, sans-serif" font-size="2.3px" font-weight="bold" fill="#c4c4c4" text-anchor="middle" textLength="30" lengthAdjust="spacingAndGlyphs">ROE Comparison: Target Combined with Acquiror</text>
<text x="648.0" y="65.3" font-family="Liberation Sans, sans-serif" font-size="2.3px" font-weight="bold" fill="#c4c4c4" text-anchor="middle" textLength="26" lengthAdjust="spacingAndGlyphs">Transaction Value 2,090 Shares Issued 59</text>
<rect x="619.00" y="81.98" width="3.5" height="24.62" fill="url(#t5b)"/>
<rect x="623.00" y="74.31" width="3.7" height="32.29" fill="url(#t5r)"/>
<rect x="629.00" y="81.52" width="3.5" height="25.08" fill="url(#t5b)"/>
<rect x="633.00" y="74.87" width="3.7" height="31.73" fill="url(#t5r)"/>
<rect x="639.00" y="84.42" width="3.5" height="22.18" fill="url(#t5b)"/>
<rect x="643.00" y="77.40" width="3.7" height="29.20" fill="url(#t5r)"/>
<rect x="649.00" y="85.35" width="3.5" height="21.25" fill="url(#t5b)"/>
<rect x="653.00" y="78.52" width="3.7" height="28.08" fill="url(#t5r)"/>
<rect x="659.00" y="86.38" width="3.5" height="20.22" fill="url(#t5b)"/>
<rect x="663.00" y="79.46" width="3.7" height="27.14" fill="url(#t5r)"/>
<rect x="669.00" y="86.94" width="3.5" height="19.66" fill="url(#t5b)"/>
<rect x="673.00" y="79.74" width="3.7" height="26.86" fill="url(#t5r)"/>
<rect x="679.00" y="88.16" width="3.5" height="18.44" fill="url(#t5b)"/>
<rect x="683.00" y="80.95" width="3.7" height="25.65" fill="url(#t5r)"/>
<g fill="#e4e4e4">
<rect x="714.3" y="106.1" width="3" height="1"/>
<rect x="714.3" y="101.4" width="3" height="1"/>
<rect x="714.3" y="96.7" width="3" height="1"/>
<rect x="714.3" y="92.1" width="3" height="1"/>
<rect x="714.3" y="87.4" width="3" height="1"/>
<rect x="714.3" y="82.7" width="3" height="1"/>
<rect x="714.3" y="78.0" width="3" height="1"/>
<rect x="714.3" y="73.3" width="3" height="1"/>
<rect x="714.3" y="68.7" width="3" height="1"/>
</g>
<text x="750.0" y="63.2" font-family="Liberation Sans, sans-serif" font-size="2.3px" font-weight="bold" fill="#7f95c8" text-anchor="middle" textLength="34" lengthAdjust="spacingAndGlyphs">ROE Comparison: Target Combined with Acquiror</text>
<text x="750.0" y="65.3" font-family="Liberation Sans, sans-serif" font-size="2.3px" font-weight="bold" fill="#7f95c8" text-anchor="middle" textLength="28" lengthAdjust="spacingAndGlyphs">Transaction Value 2,090 Shares Issued 59</text>
<rect x="719.30" y="81.98" width="3.0" height="24.62" fill="url(#t6b)"/>
<rect x="723.30" y="74.31" width="3.0" height="32.29" fill="url(#t6r)"/>
<rect x="729.30" y="81.52" width="3.0" height="25.08" fill="url(#t6b)"/>
<rect x="733.30" y="74.87" width="3.0" height="31.73" fill="url(#t6r)"/>
<rect x="739.30" y="84.42" width="3.0" height="22.18" fill="url(#t6b)"/>
<rect x="743.30" y="77.40" width="3.0" height="29.20" fill="url(#t6r)"/>
<rect x="749.30" y="85.35" width="3.0" height="21.25" fill="url(#t6b)"/>
<rect x="753.30" y="78.52" width="3.0" height="28.08" fill="url(#t6r)"/>
<rect x="759.30" y="86.38" width="3.0" height="20.22" fill="url(#t6b)"/>
<rect x="763.30" y="79.46" width="3.0" height="27.14" fill="url(#t6r)"/>
<rect x="769.30" y="86.94" width="3.0" height="19.66" fill="url(#t6b)"/>
<rect x="773.30" y="79.74" width="3.0" height="26.86" fill="url(#t6r)"/>
<rect x="779.30" y="88.16" width="3.0" height="18.44" fill="url(#t6b)"/>
<rect x="783.30" y="80.95" width="3.0" height="25.65" fill="url(#t6r)"/>
<g fill="#e4e4e4">
<rect x="815.4" y="106.1" width="3" height="1"/>
<rect x="815.4" y="101.4" width="3" height="1"/>
<rect x="815.4" y="96.7" width="3" height="1"/>
<rect x="815.4" y="92.1" width="3" height="1"/>
<rect x="815.4" y="87.4" width="3" height="1"/>
<rect x="815.4" y="82.7" width="3" height="1"/>
<rect x="815.4" y="78.0" width="3" height="1"/>
<rect x="815.4" y="73.3" width="3" height="1"/>
<rect x="815.4" y="68.7" width="3" height="1"/>
</g>
<text x="852.0" y="63.2" font-family="Liberation Sans, sans-serif" font-size="2.3px" font-weight="bold" fill="#b0b0b0" text-anchor="middle" textLength="38" lengthAdjust="spacingAndGlyphs">ROE Comparison: Target Combined with Acquiror</text>
<text x="852.0" y="65.3" font-family="Liberation Sans, sans-serif" font-size="2.3px" font-weight="bold" fill="#b0b0b0" text-anchor="middle" textLength="32" lengthAdjust="spacingAndGlyphs">Transaction Value 2,090 Shares Issued 59</text>
<rect x="820.40" y="81.98" width="1.8" height="24.62" fill="#5a84bf"/>
<rect x="823.30" y="74.31" width="2.0" height="32.29" fill="#b65e5c"/>
<rect x="830.40" y="81.52" width="1.8" height="25.08" fill="#5a84bf"/>
<rect x="833.30" y="74.87" width="2.0" height="31.73" fill="#b65e5c"/>
<rect x="840.40" y="84.42" width="1.8" height="22.18" fill="#5a84bf"/>
<rect x="843.30" y="77.40" width="2.0" height="29.20" fill="#b65e5c"/>
<rect x="850.40" y="85.35" width="1.8" height="21.25" fill="#5a84bf"/>
<rect x="853.30" y="78.52" width="2.0" height="28.08" fill="#b65e5c"/>
<rect x="860.40" y="86.38" width="1.8" height="20.22" fill="#5a84bf"/>
<rect x="863.30" y="79.46" width="2.0" height="27.14" fill="#b65e5c"/>
<rect x="870.40" y="86.94" width="1.8" height="19.66" fill="#5a84bf"/>
<rect x="873.30" y="79.74" width="2.0" height="26.86" fill="#b65e5c"/>
<rect x="880.40" y="88.16" width="1.8" height="18.44" fill="#5a84bf"/>
<rect x="883.30" y="80.95" width="2.0" height="25.65" fill="#b65e5c"/>
</svg>
</body></html>
